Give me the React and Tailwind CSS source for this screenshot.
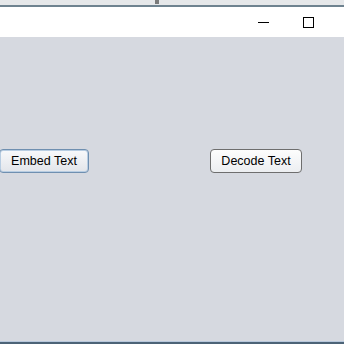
export default function App() {
  return (
    <div className="w-[344px] h-[344px] flex flex-col overflow-hidden bg-[#d6d9e0]" style={{ fontFamily: '"Liberation Sans", Arial, sans-serif' }}>
      <div className="h-[5px] bg-[#e6e8ea] flex justify-center">
        <div className="w-[4px] h-[4px] bg-[#7a7a7a] ml-[-30px]" />
      </div>
      <div className="h-[2px] bg-[#6f8390]" />
      <div className="h-[30px] bg-white flex items-center justify-end">
        <div className="w-[11px] h-[1px] bg-black mr-[34px]" />
        <div className="w-[11px] h-[11px] border border-black mr-[30px]" />
      </div>
      <div className="flex-1 flex items-start pt-[112px]">
        <button className="w-[90px] h-[24px] ml-[-1px] rounded-[4px] border border-[#6f8fb0] bg-gradient-to-b from-[#f8f9fb] to-[#e2e5ea] text-[12.5px] text-black shadow-[inset_0_0_0_1px_#b8cde2]">
          Embed Text
        </button>
        <button className="w-[92px] h-[24px] ml-[121px] rounded-[4px] border border-[#6e6e6e] bg-gradient-to-b from-[#fdfdfd] to-[#eceef1] text-[12.5px] text-black">
          Decode Text
        </button>
      </div>
      <div className="h-[1px] bg-[#b8c8dc]" />
      <div className="h-[2px] bg-[#4c6377]" />
    </div>
  );
}
